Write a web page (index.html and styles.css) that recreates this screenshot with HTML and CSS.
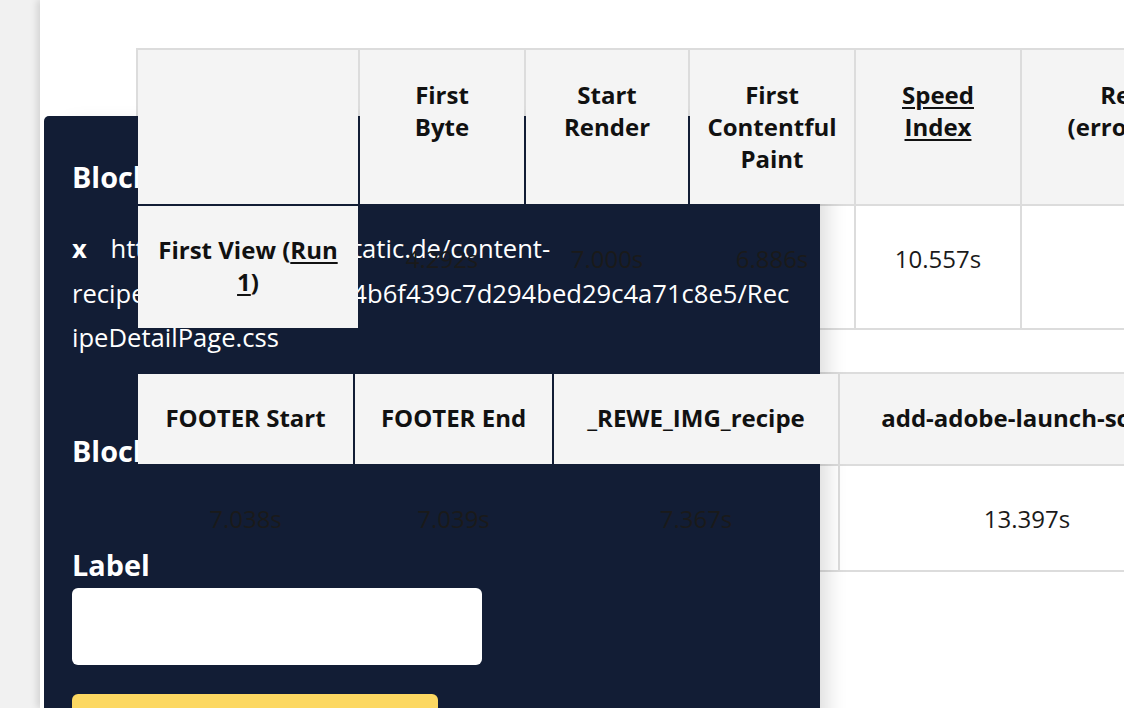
FILE: index.html
```html
<!DOCTYPE html>
<html lang="en">
<head>
<meta charset="utf-8">
<title>Test Result</title>
<link rel="stylesheet" href="styles.css">
</head>
<body>
<main class="page">
  <table class="results t1">
    <colgroup>
      <col class="w220"><col class="w164"><col class="w162"><col class="w164"><col class="w164"><col class="w232">
    </colgroup>
    <thead>
      <tr>
        <th></th>
        <th>First<br>Byte</th>
        <th>Start<br>Render</th>
        <th>First<br>Contentful<br>Paint</th>
        <th><a href="#">Speed<br>Index</a></th>
        <th>Result<br>(error code)</th>
      </tr>
    </thead>
    <tbody>
      <tr>
        <th class="rowhead">First View (<a href="#">Run 1</a>)</th>
        <td><span>4.292s</span></td>
        <td><span>7.000s</span></td>
        <td><span>6.886s</span></td>
        <td><span>10.557s</span></td>
        <td><span>0</span></td>
      </tr>
    </tbody>
  </table>

  <table class="results t2">
    <colgroup>
      <col class="w215"><col class="w197"><col class="w284"><col class="w374">
    </colgroup>
    <thead>
      <tr>
        <th>FOOTER Start</th>
        <th>FOOTER End</th>
        <th>_REWE_IMG_recipe</th>
        <th>add-adobe-launch-script</th>
      </tr>
    </thead>
    <tbody>
      <tr>
        <td><span>7.038s</span></td>
        <td><span>7.039s</span></td>
        <td><span>7.367s</span></td>
        <td><span>13.397s</span></td>
      </tr>
    </tbody>
  </table>
</main>

<aside class="panel">
  <h3 class="panel-title">Block Requests</h3>
  <ul class="blocked">
    <li><button class="remove" type="button">x</button> https://bilder.rewe-static.de/content-recipes/static/8e0a3dfd4b6f439c7d294bed29c4a71c8e5/RecipeDetailPage.css</li>
  </ul>
  <h3 class="panel-title second">Block Domains</h3>
  <label class="field-label" for="label">Label</label>
  <input class="field" id="label" type="text">
  <button class="run" type="button">Re-Run Experiment</button>
</aside>
</body>
</html>
```

FILE: styles.css
```css
html, body {
  margin: 0;
  height: 100%;
  overflow: hidden;
}

body {
  background: #f1f1f1;
  font-family: "Open Sans", "Noto Sans", sans-serif;
  color: #111;
}

.page {
  margin-left: 40px;
  min-height: 100%;
  box-sizing: border-box;
  background: #fff;
  box-shadow: -3px 0 7px rgba(0, 0, 0, 0.13);
  padding: 48px 0 0 96px;
}

/* tables */
.results {
  border-collapse: separate;
  border-spacing: 2px;
  background: #dcdcdc;
  table-layout: fixed;
  font-size: 24px;
  line-height: 32px;
  text-align: center;
}

.t1 { width: 1120px; }
.t2 { width: 1080px; margin-top: 42px; }

.w220 { width: 220px; }
.w164 { width: 164px; }
.w162 { width: 162px; }
.w232 { width: 232px; }
.w215 { width: 215px; }
.w197 { width: 197px; }
.w284 { width: 284px; }
.w374 { width: 374px; }

.results th {
  position: relative;
  z-index: 2;
  background: #f4f4f4;
  font-weight: 700;
  color: #111;
  padding: 28px 12px 30px;
  vertical-align: middle;
}

.t1 thead th {
  vertical-align: top;
  padding: 29px 12px;
}

.results th a {
  color: #111;
  text-decoration: underline;
  text-underline-offset: 3px;
}

.results td {
  background: #fff;
  padding: 37px 12px 35px;
  vertical-align: top;
  font-weight: 400;
}

.results td span {
  position: relative;
  z-index: 2;
  color: #1a1a1a;
}

/* overlay panel */
.panel {
  position: absolute;
  left: 44px;
  top: 116px;
  z-index: 1;
  width: 776px;
  height: 640px;
  box-sizing: border-box;
  padding: 41px 28px 0;
  background: #121d35;
  border-radius: 5px 5px 0 0;
  box-shadow: 16px 0 18px -8px rgba(0, 0, 0, 0.13);
  color: #fff;
}

.panel-title {
  margin: 0;
  font-size: 28.8px;
  line-height: 40px;
  font-weight: 700;
}

.panel-title.second {
  margin-top: 70px;
}

.blocked {
  list-style: none;
  margin: 30px 0 0;
  padding: 0;
  font-size: 25.6px;
  line-height: 44.5px;
  overflow-wrap: break-word;
}

.remove {
  background: none;
  border: 0;
  padding: 0;
  margin: 0 17px 0 0;
  color: #fff;
  font: 700 25.6px/44.5px "Open Sans", "Noto Sans", sans-serif;
}

.field-label {
  display: block;
  margin-top: 74px;
  font-size: 28.8px;
  line-height: 40px;
  font-weight: 700;
}

.field {
  display: block;
  margin-top: 3px;
  width: 410px;
  height: 77px;
  box-sizing: border-box;
  border: 0;
  border-radius: 6px;
  background: #fff;
}

.run {
  display: block;
  margin-top: 29px;
  width: 366px;
  height: 60px;
  border: 0;
  border-radius: 6px;
  background: #fcd862;
  color: #121d35;
  font: 700 24px "Open Sans", "Noto Sans", sans-serif;
}
```
